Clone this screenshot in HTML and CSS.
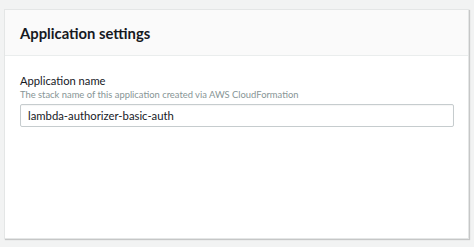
FILE: index.html
```html
<!DOCTYPE html>
<html>
<head>
<meta charset="utf-8">
<link rel="stylesheet" href="styles.css">
</head>
<body>
<div class="page">
  <section class="card">
    <header class="card-header">
      <h2 class="card-title">Application settings</h2>
    </header>
    <div class="card-body">
      <div class="field">
        <label class="field-label" for="appname">Application name</label>
        <div class="field-desc">The stack name of this application created via AWS CloudFormation</div>
        <input class="field-input" id="appname" type="text" value="lambda-authorizer-basic-auth">
      </div>
    </div>
  </section>
</div>
</body>
</html>
```

FILE: styles.css
```css
html, body {
  margin: 0;
  padding: 0;
  background: #f2f3f3;
  font-family: "Lato", "Liberation Sans", sans-serif;
}
.page {
  width: 474px;
  height: 247px;
  box-sizing: border-box;
  padding: 9px 5px 8px 4px;
}
.card {
  height: 100%;
  box-sizing: border-box;
  background: #ffffff;
  border: 1px solid #e4e6e6;
  box-shadow: 1px 1px 1px rgba(0,0,0,0.18);
  display: flex;
  flex-direction: column;
}
.card-header {
  height: 46px;
  box-sizing: border-box;
  background: #fafafa;
  border-bottom: 1px solid #eaeded;
  display: flex;
  align-items: center;
  padding: 0 15px;
}
.card-title {
  margin: 0;
  font-size: 14.8px;
  font-weight: 700;
  color: #16191f;
}
.card-body {
  padding: 18px 15px 0 15px;
}
.field {
  display: flex;
  flex-direction: column;
}
.field-label {
  font-size: 11.2px;
  color: #16191f;
  line-height: 14px;
}
.field-desc {
  font-size: 9.4px;
  color: #879596;
  line-height: 13px;
}
.field-input {
  margin-top: 3px;
  width: 434px;
  height: 23px;
  box-sizing: border-box;
  border: 1px solid #c6ccce;
  border-radius: 2px;
  padding: 0 7px;
  font-family: "Lato", "Liberation Sans", sans-serif;
  font-size: 11.3px;
  color: #16191f;
  background: #fff;
  box-shadow: inset 0 1px 1px rgba(0,0,0,0.04);
}
```
